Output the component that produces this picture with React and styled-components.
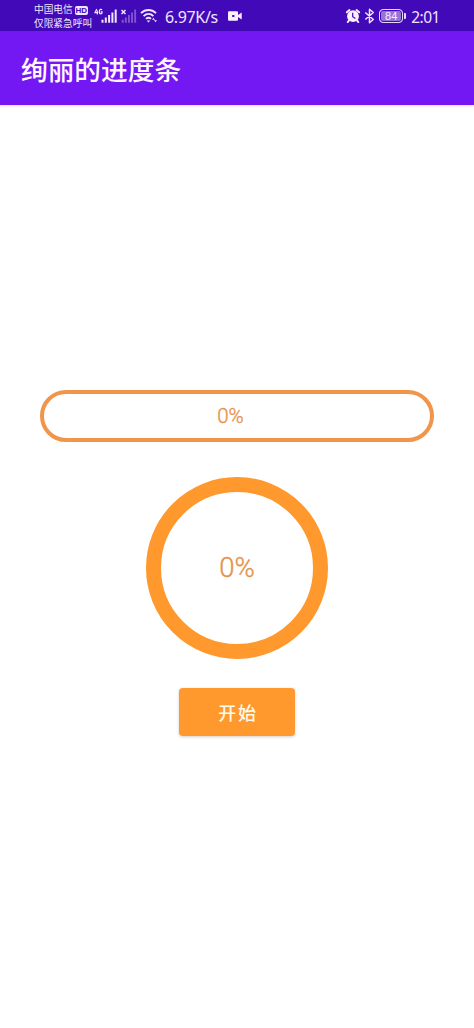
import React, {useEffect, useState} from "react";
import styled, {createGlobalStyle} from "styled-components";

const App = () => {
  const [progress, setProgress] = useState(0);
  const [running, setRunning] = useState(false);

  useEffect(() => {
    if (!running) return undefined;
    const timer = setInterval(() => {
      setProgress((val) => Math.min(val + 1, 100));
    }, 50);
    return () => clearInterval(timer);
  }, [running]);

  const onStart = () => {
    setProgress(0);
    setRunning(true);
  };

  return (
    <Screen>
      <GlobalStyle />
      <StatusBar>
        <StatusGroup>
          <Carrier>
            <CarrierLine>
              中国电信
              <HdBadge>HD</HdBadge>
            </CarrierLine>
            <CarrierLine>仅限紧急呼叫</CarrierLine>
          </Carrier>
          <Signal4gSvg />
          <SignalOffSvg />
          <WifiSvg />
          <Speed>6.97K/s</Speed>
          <CameraSvg />
        </StatusGroup>
        <StatusGroup>
          <AlarmSvg />
          <BluetoothSvg />
          <Battery>
            <BatteryBody>84</BatteryBody>
            <BatteryCap />
          </Battery>
          <Clock>2:01</Clock>
        </StatusGroup>
      </StatusBar>
      <AppBar>
        <Title>绚丽的进度条</Title>
      </AppBar>
      <Content>
        <Bar>
          <BarFill style={{width: `${progress}%`}} />
          <BarPercent>{progress}%</BarPercent>
        </Bar>
        <Ring>
          <RingPercent>{progress}%</RingPercent>
        </Ring>
        <StartButton onClick={onStart}>开始</StartButton>
      </Content>
    </Screen>
  );
};

const Signal4gSvg = () => (
  <Icon width="24" height="16" viewBox="0 0 24 16">
    <path d="M2.8 1L1 4.6H4.2M3.3 2.6V6.4M8 2C7.4 0.9 5.3 0.9 5.3 3.7C5.3 6.5 8 6.2 8 4.8V3.9H6.7" stroke="#F0E5FF" strokeWidth="1.2" fill="none" />
    <path d="M7.5 11.7h2v3h-2zM10.8 9.6h2v5.1h-2zM14.1 7.1h2v7.6h-2zM17.4 4.4h2v10.3h-2zM20.7 1.5h2v13.2h-2z" fill="#F0E5FF" />
  </Icon>
);

const SignalOffSvg = () => (
  <Icon width="17" height="16" viewBox="0 0 17 16" gap={2}>
    <path d="M1.5 2l4 4M5.5 2l-4 4" stroke="#F0E5FF" strokeWidth="1.5" />
    <path d="M1.8 11.7h1.9v3H1.8zM4.9 9.6h1.9v5.1H4.9zM8 7.1h1.9v7.6H8zM11.1 4.4H13v10.3h-1.9zM14.2 1.5h1.9v13.2h-1.9z" fill="#8154D2" />
  </Icon>
);

const WifiSvg = () => (
  <Icon width="18" height="16" viewBox="0 0 18 16" gap={3}>
    <path d="M1 5.1C5.3 0.9 11.7 0.9 16 5.1M3.6 8.1C6.5 5.3 10.5 5.3 13.4 8.1M6 10.9c1.5-1.4 3.5-1.4 5 0" stroke="#F0E5FF" strokeWidth="1.9" fill="none" />
    <path d="M6.6 12.5h3.8l-1.9 2.1zM12 11.7l1.5-2 1.5 2zM14 12.3h3l-1.5 2z" fill="#F0E5FF" />
  </Icon>
);

const CameraSvg = () => (
  <Icon width="15" height="12" viewBox="0 0 15 12" gap={8}>
    <path fillRule="evenodd" d="M2.4 1.2h7.2c.9 0 1.4.5 1.4 1.4v6.8c0 .9-.5 1.4-1.4 1.4H2.4C1.5 10.8 1 10.3 1 9.4V2.6C1 1.7 1.5 1.2 2.4 1.2zM5.2 4.9v2.2h2.2V4.9z" fill="#FBEFFF" />
    <path d="M11 5.1l3.7-2.5v6.8L11 6.9z" fill="#FBEFFF" />
  </Icon>
);

const AlarmSvg = () => (
  <Icon width="16" height="16" viewBox="0 0 16 16">
    <circle cx="8" cy="8.2" r="5.9" fill="#FBEFFF" />
    <path d="M1.8 4.3L4.5 2M14.2 4.3L11.5 2M4 12.5l-1.3 1.6M12 12.5l1.3 1.6" stroke="#FBEFFF" strokeWidth="1.9" strokeLinecap="round" />
    <path d="M7.7 4.7v4l2.7 1.8" stroke="#4109B7" strokeWidth="1.2" fill="none" />
  </Icon>
);

const BluetoothSvg = () => (
  <Icon width="11" height="16" viewBox="0 0 11 16" gap={3}>
    <path d="M1.3 4.5l8 7L5.5 14.7V1.3l3.8 3.2-8 7" stroke="#F0E5FF" strokeWidth="1.5" fill="none" strokeLinejoin="round" />
  </Icon>
);

const GlobalStyle = createGlobalStyle`
  body {
    margin: 0;
    background: #FFFFFF;
  }
`;

const Screen = styled.div`
  display: flex;
  flex-direction: column;
  height: 1028px;
  overflow: hidden;
  font-family: Roboto, "Noto Sans CJK SC", sans-serif;
`;

const StatusBar = styled.div`
  box-sizing: border-box;
  display: flex;
  flex-shrink: 0;
  justify-content: space-between;
  height: 31px;
  padding: 0 34px;
  background: #4109B7;
  color: #F0E5FF;
`;

const StatusGroup = styled.div`
  display: flex;
  align-items: center;
  height: 32px;
`;

const Icon = styled.svg`
  flex-shrink: 0;
  margin-left: ${(props) => props.gap || 0}px;
`;

const Carrier = styled.div`
  width: 60px;
  padding-top: 2px;
`;

const CarrierLine = styled.div`
  display: flex;
  align-items: center;
  font-size: 9.7px;
  line-height: 14px;
  white-space: nowrap;
`;

const HdBadge = styled.span`
  width: 13px;
  height: 9px;
  margin-left: 2px;
  border-radius: 2px;
  background: #F0E5FF;
  color: #4109B7;
  font-family: "Liberation Sans", sans-serif;
  font-size: 8px;
  font-weight: 700;
  line-height: 9px;
  text-align: center;
`;

const Speed = styled.span`
  width: 54px;
  margin-left: 7px;
  padding-top: 2px;
  font-family: "Noto Sans", sans-serif;
  font-size: 16px;
  line-height: 20px;
  letter-spacing: -0.35px;
  white-space: nowrap;
`;

const Battery = styled.div`
  display: flex;
  align-items: center;
  margin-left: 4px;
`;

const BatteryBody = styled.div`
  box-sizing: border-box;
  width: 24px;
  height: 14px;
  border: 1.5px solid #E4D6FA;
  border-radius: 4px;
  background: #9673D8;
  box-shadow: inset 0 0 0 1px #4109B7;
  color: #FBEFFF;
  font-family: "Liberation Sans", sans-serif;
  font-size: 11px;
  line-height: 12px;
  text-align: center;
`;

const BatteryCap = styled.div`
  width: 2px;
  height: 6px;
  margin-left: 1px;
  border-radius: 0 1px 1px 0;
  background: #E4D6FA;
`;

const Clock = styled.span`
  margin-left: 5px;
  padding-top: 2px;
  font-family: "Noto Sans", sans-serif;
  font-size: 15.5px;
  line-height: 20px;
  letter-spacing: -0.5px;
`;

const AppBar = styled.div`
  z-index: 1;
  display: flex;
  flex-shrink: 0;
  align-items: center;
  height: 74px;
  padding-left: 21px;
  background: #7317F3;
  box-shadow: 0 1px 2px rgba(80, 20, 120, 0.18);
`;

const Title = styled.h1`
  margin: 0;
  padding-top: 2px;
  color: #FFF5FF;
  font-family: "Noto Sans CJK SC", sans-serif;
  font-size: 26.7px;
  font-weight: 500;
  line-height: 38px;
`;

const Content = styled.div`
  display: flex;
  flex: 1;
  flex-direction: column;
  align-items: center;
  padding: 285px 40px 0;
`;

const Bar = styled.div`
  box-sizing: border-box;
  display: grid;
  flex-shrink: 0;
  align-items: center;
  width: 100%;
  height: 52px;
  overflow: hidden;
  border: 4px solid #F0954A;
  border-radius: 26px;

  > * {
    grid-area: 1 / 1;
  }
`;

const BarFill = styled.div`
  height: 100%;
  background: #FFE0BD;
`;

const Percent = styled.span`
  color: #E5914A;
  font-weight: 300;
  line-height: 1;
  text-align: center;
  -webkit-text-stroke: 0.35px #E5914A;
`;

const BarPercent = styled(Percent)`
  padding-right: 13px;
  font-size: 20.5px;
`;

const RingPercent = styled(Percent)`
  padding-bottom: 1px;
  font-size: 27.5px;
`;

const Ring = styled.div`
  box-sizing: border-box;
  display: flex;
  flex-shrink: 0;
  align-items: center;
  justify-content: center;
  width: 182px;
  height: 182px;
  margin-top: 35px;
  border: 15px solid #FF992D;
  border-radius: 50%;
`;

const StartButton = styled.button`
  flex-shrink: 0;
  width: 116px;
  height: 48px;
  margin-top: 29px;
  padding: 0 0 0 2px;
  border: none;
  border-radius: 4px;
  background: #FF992D;
  box-shadow: 0 1px 3px rgba(90, 60, 30, 0.25);
  color: #FFFBEA;
  font-family: "Noto Sans CJK SC", sans-serif;
  font-size: 18px;
  font-weight: 500;
  letter-spacing: 1.7px;
`;

export default App;
